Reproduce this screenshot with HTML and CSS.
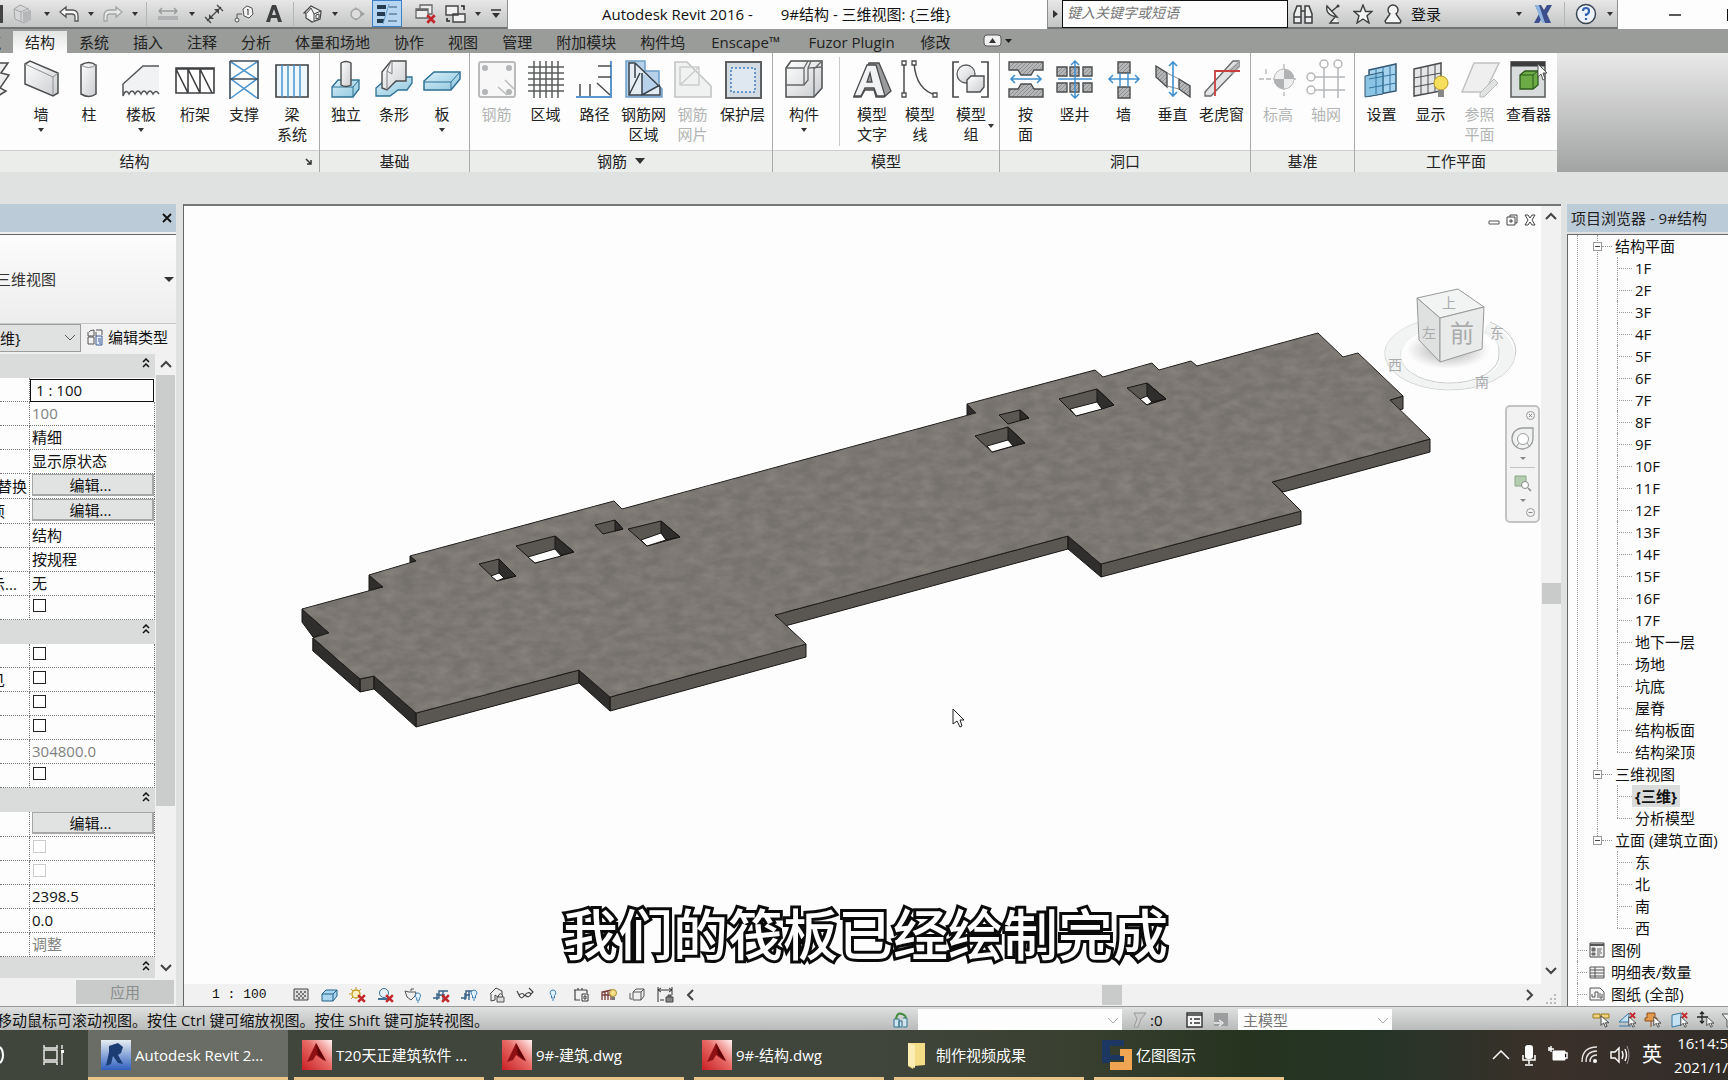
FILE: index.html
```html
<!DOCTYPE html>
<html lang="zh-CN">
<head>
<meta charset="utf-8">
<title>Autodesk Revit 2016 - 9#结构 - 三维视图: {三维}</title>
<link rel="stylesheet" href="styles.css">
</head>
<body>
<svg class="defs" aria-hidden="true">
  <defs>
    <linearGradient id="steel" x1="0" y1="0" x2="1" y2="1"><stop offset="0" stop-color="#fff"/><stop offset="1" stop-color="#c9cccf"/></linearGradient>
    <linearGradient id="aqua" x1="0" y1="0" x2="1" y2="1"><stop offset="0" stop-color="#d8f0f8"/><stop offset="1" stop-color="#8fc6de"/></linearGradient>
    <linearGradient id="red" x1="1" y1="0" x2="0" y2="1"><stop offset="0" stop-color="#fff3f0"/><stop offset=".45" stop-color="#e86a66"/><stop offset="1" stop-color="#c81f24"/></linearGradient>
    <linearGradient id="blue" x1="0" y1="0" x2="0" y2="1"><stop offset="0" stop-color="#e6eef2"/><stop offset="1" stop-color="#2f5fc0"/></linearGradient>
    <pattern id="hatch" width="4" height="4" patternUnits="userSpaceOnUse"><rect width="4" height="4" fill="#b4b6b8"/><path d="M0 4L4 0" stroke="#8d8f91"/></pattern>
    <symbol id="acad" viewBox="0 0 30 30"><rect width="30" height="30" fill="url(#red)"/><path d="M14 3L5 22l6-2 3-5 7 5 3 1z" fill="#8d1015"/><path d="M14 3l2 12 8 6z" fill="#5c0508"/></symbol>
    <symbol id="redx" viewBox="0 0 8 8"><path d="M1 1l6 6M7 1L1 7" stroke="#c3262b" stroke-width="2.2"/></symbol>
    <symbol id="cursor" viewBox="0 0 10 15"><path d="M1 1v11l3-3 2 5 2-1-2-4h4z" fill="#fff" stroke="#333"/></symbol>
    <symbol id="lamp" viewBox="0 0 8 12"><path d="M4 1a3 3 0 0 1 1.500 5.500V9h-3V6.500A3 3 0 0 1 4 1zM3 11h2" fill="#dff0fb" stroke="#3a7fb5"/></symbol>
    <symbol id="fold" viewBox="0 0 8 10"><path d="M1 4l3-3 3 3M1 9l3-3 3 3" fill="none" stroke="#111" stroke-width="1.500"/></symbol>
    <symbol id="chev" viewBox="0 0 12 8"><path d="M1 1l5 5 5-5" fill="none" stroke="#aaa"/></symbol>
  </defs>
</svg>

<header class="titlebar">
  <div class="quick">
    <span class="cutedge"></span>
    <button class="q wide" aria-label="模型"><svg width="22" height="22" viewBox="0 0 22 22"><path d="M2 6l6-4 5 2 5 4v8l-6 4-9-4z" fill="#d5d7d8" stroke="#a3a5a6"/><path d="M2 6l7 3v10M9 9l8-4" fill="none" stroke="#a3a5a6"/><path d="M11 9l8-2v10l-8 4z" fill="#b5b7b8"/></svg></button>
    <button class="drop" aria-label="更多"></button>
    <button class="q" aria-label="放弃"><svg width="20" height="18" viewBox="0 0 20 18"><path d="M7 2L1 7l6 5V9h6q3 0 3 3v4h3v-5q0-6-6-6H7z" fill="#f8f8f8" stroke="#555" stroke-width="1.300"/></svg></button>
    <button class="drop" aria-label="放弃列表"></button>
    <button class="q" aria-label="重做"><svg width="20" height="18" viewBox="0 0 20 18"><path d="M13 2l6 5-6 5V9H7q-3 0-3 3v4H1v-5q0-6 6-6h6z" fill="#e8e8e8" stroke="#a2a4a5" stroke-width="1.300"/></svg></button>
    <button class="drop" aria-label="重做列表"></button>
    <i class="qsep"></i>
    <button class="q wide" aria-label="测量"><svg width="20" height="14" viewBox="0 0 20 14"><path d="M1 4h18M4 1L1 4l3 3M16 1l3 3-3 3" fill="none" stroke="#9a9c9d" stroke-width="1.500"/><path d="M0 11h20" stroke="#b0b2b3" stroke-width="4"/></svg></button>
    <button class="drop" aria-label="测量列表"></button>
    <button class="q" aria-label="对齐尺寸标注"><svg width="20" height="20" viewBox="0 0 20 20"><path d="M3 17L17 3M1 13l6 6M13 1l6 6" stroke="#444" stroke-width="1.300"/><path d="M5 10v5h5zM10 5h5v5z" fill="#444"/></svg></button>
    <button class="q" aria-label="按类别标记"><svg width="20" height="18" viewBox="0 0 20 18"><path d="M9 4l4-3 5 2 1 6-4 4-5-2z" fill="#f2f2f2" stroke="#555"/><path d="M14 4v6M13 5l1-1" stroke="#333"/><path d="M8 9H3v6" fill="none" stroke="#555"/><circle cx="3" cy="15" r="2" fill="#eee" stroke="#555"/></svg></button>
    <button class="q" aria-label="文字"><svg width="18" height="19" viewBox="0 0 18 19"><path d="M7 1h4l6 17h-4l-1-4H6l-1 4H1zM7 11h4L9 5z" fill="#3d3f40" fill-rule="evenodd"/></svg></button>
    <i class="qsep"></i>
    <button class="q" aria-label="默认三维视图"><svg width="20" height="18" viewBox="0 0 20 18"><path d="M1 8l7-7 10 5v1l-1 7-8 3-6-4V8z" fill="#eceded" stroke="#444" stroke-width="1.200"/><path d="M4 8l4-5 3 6v8M11 9l7-3M13 10l3-1v4l-3 1z" fill="#f8f8f8" stroke="#444"/></svg></button>
    <button class="drop" aria-label="三维列表"></button>
    <button class="q" aria-label="剖面"><svg width="18" height="16" viewBox="0 0 18 16"><path d="M7 1l10 7-10 7z" fill="#9fa1a2"/><circle cx="8" cy="8" r="5" fill="#ddd" stroke="#a2a4a5" stroke-width="1.500"/></svg></button>
    <button class="q pressed" aria-label="细线"><svg width="24" height="22" viewBox="0 0 24 22"><path d="M2 4h9M2 11h8M2 18h7" stroke="#263c50" stroke-width="4"/><path d="M14 4h8M14 11h8M13 18h9" stroke="#37556f"/><path d="M14 1L8 21" stroke="#6aa0cf"/></svg></button>
    <button class="q after" aria-label="关闭隐藏窗口"><svg width="22" height="20" viewBox="0 0 22 20"><path d="M5 5V1h12v9h-4M1 5h12v9H1z" fill="#ededed" stroke="#666" stroke-width="1.300"/><path d="M1 6h12" stroke="#666" stroke-width="2"/><use href="#redx" x="11" y="10" width="10" height="10"/></svg></button>
    <button class="q" aria-label="切换窗口"><svg width="22" height="20" viewBox="0 0 22 20"><path d="M1 2h12v9H1z M8 10h12v8H8z" fill="#f1f1f1" stroke="#444" stroke-width="1.400"/><path d="M16 2h3v4M2 14v3h3" fill="none" stroke="#222" stroke-width="1.500"/></svg></button>
    <button class="drop" aria-label="窗口列表"></button>
    <button class="q more-tools" aria-label="自定义快速访问工具栏"><svg width="12" height="10" viewBox="0 0 12 10"><path d="M1 1h10" stroke="#333" stroke-width="1.500"/><path d="M2 4h8l-4 5z" fill="#333"/></svg></button>
  </div>
  <h1>Autodesk Revit 2016 - <span>9#结构 - 三维视图: {三维}</span></h1>
  <div class="info">
    <button class="drop side" aria-label="展开"></button>
    <input type="search" placeholder="键入关键字或短语" aria-label="搜索">
    <button class="q" aria-label="查找"><svg width="20" height="22" viewBox="0 0 20 22"><path d="M1 20v-9l3-8h4v17zM12 20V3h4l3 8v9zM8 8h4M1 14h7M12 14h7" fill="#eee" stroke="#3b3d3e" stroke-width="1.500"/></svg></button>
    <button class="q" aria-label="通讯中心"><svg width="20" height="22" viewBox="0 0 20 22"><path d="M4 3q-2 9 10 11zM9 8l6-5M12 14l-5 6h9" fill="#eee" stroke="#3b3d3e" stroke-width="1.400"/><circle cx="15" cy="3" r="1.500" fill="#3b3d3e"/></svg></button>
    <button class="q" aria-label="收藏夹"><svg width="20" height="20" viewBox="0 0 20 20"><path d="M10 1l2.500 6.500H19l-5 4.300L16 19l-6-4-6 4 2-7.200-5-4.300h6.500z" fill="#f5f5f5" stroke="#3b3d3e" stroke-width="1.400"/></svg></button>
    <button class="q" aria-label="用户"><svg width="20" height="20" viewBox="0 0 20 20"><circle cx="10" cy="6" r="5" fill="#f5f5f5" stroke="#3b3d3e" stroke-width="1.400"/><path d="M7 10l-5 7 1 2h14l1-2-5-7" fill="#f5f5f5" stroke="#3b3d3e" stroke-width="1.400"/></svg></button>
    <button class="login">登录</button>
    <button class="drop" aria-label="登录菜单"></button>
    <button class="q wide" aria-label="Exchange Apps"><svg width="20" height="20" viewBox="0 0 20 20"><path d="M2 1h6l3 5 3-5h5l-5 9 4 9h-6l-3-5-3 5H1l5-9z" fill="#3c4f8c"/><path d="M2 1h4l6 18H9L7 14z" fill="#8fb3dd"/></svg></button>
    <i class="qsep"></i>
    <button class="q wide" aria-label="帮助"><svg width="22" height="22" viewBox="0 0 22 22"><circle cx="11" cy="11" r="9.500" fill="#eef3fa" stroke="#3a4654" stroke-width="1.500"/><path d="M8 8q0-3 3-3t3 3-3 3.500V13M11 15v2" fill="none" stroke="#3763b4" stroke-width="2.200"/></svg></button>
    <button class="drop" aria-label="帮助菜单"></button>
  </div>
  <div class="winctl">
    <button aria-label="最小化"><svg width="12" height="2" viewBox="0 0 12 2"><path d="M0 1h12" stroke="#222" stroke-width="1.500"/></svg></button>
    <button aria-label="最大化"><svg width="12" height="12" viewBox="0 0 12 12"><path d="M1 1h10v10H1z" fill="none" stroke="#111" stroke-width="2"/></svg></button>
  </div>
</header>

<nav class="tabs">
  <button class="edge">建筑</button>
  <button class="active">结构</button><button>系统</button><button>插入</button><button>注释</button><button>分析</button><button>体量和场地</button><button>协作</button><button>视图</button><button>管理</button><button>附加模块</button><button>构件坞</button><button class="addin">Enscape™</button><button class="addin">Fuzor Plugin</button><button>修改</button>
  <button class="min" aria-label="最小化功能区"><svg width="34" height="14" viewBox="0 0 34 14"><rect x="1" y="1" width="17" height="11" rx="3" fill="#f0f1f0" stroke="#555"/><path d="M9.500 4l3.500 5H6z" fill="#333"/><path d="M22 5h7l-3.500 4z" fill="#222"/></svg></button>
</nav>

<section class="ribbon">
  <div class="panel p-struct">
    <div class="tools">
      <button class="tool edge" aria-label="梁"><svg width="16" height="40" viewBox="0 0 16 40"><path d="M-2 4H8L1 14l8 2-9 13 6 3-8 5" fill="#eee" stroke="#4b4d4e" stroke-width="1.500"/></svg></button>
      <button class="tool w50"><svg viewBox="0 0 40 40"><path d="M4 5l5-3 28 12v20l-5 3L4 25z" fill="url(#steel)" stroke="#4b4d4e" stroke-width="1.500"/><path d="M4 5l28 13v18M32 18l5-4" fill="none" stroke="#8c8e90"/></svg>墙<i class="more"></i></button>
      <button class="tool w46"><svg viewBox="0 0 40 40"><path d="M12 6v29q8 5 15 0V6q-7-5-15 0z" fill="url(#steel)" stroke="#4b4d4e" stroke-width="1.500"/><path d="M12 6q8 5 15 0" fill="none" stroke="#8c8e90"/></svg>柱</button>
      <button class="tool w58"><svg viewBox="0 0 40 40"><path d="M38 7H22L2 25v12q3-8 6-2 3-6 6 0 3-6 6 0 3-6 6 0 3-6 6 0 3-5 6 0z" fill="#f1f2f3"/><path d="M38 7H22L2 25v12q3-8 6-2 3-6 6 0 3-6 6 0 3-6 6 0 3-6 6 0 3-5 6 0" fill="none" stroke="#55575a" stroke-width="1.500"/></svg>楼板<i class="more"></i></button>
      <button class="tool w50"><svg viewBox="0 0 40 40"><path d="M1 9h38v25H1zM1 10h38M1 10l12 24V10l12 24V10l12 24" fill="none" stroke="#3d3f40" stroke-width="1.600"/></svg>桁架</button>
      <button class="tool w48"><svg viewBox="0 0 40 40"><path d="M7 3l26 17L7 39M33 3L7 20l26 19" fill="none" stroke="#4a95cd" stroke-width="1.500"/><path d="M6 2h28v38M6 2v38M6 20h28" fill="none" stroke="#3d4b5a" stroke-width="1.600"/></svg>支撑</button>
      <button class="tool w48"><svg viewBox="0 0 40 40"><path d="M4 6h32v32H4z" fill="#edf6fb" stroke="#3d3f40" stroke-width="1.600"/><path d="M10 6v32M16 6v32M22 6v32M28 6v32" stroke="#4a95cd" stroke-width="1.500"/></svg>梁<br>系统</button>
    </div>
    <h2>结构<svg class="launch" width="8" height="8" viewBox="0 0 8 8"><path d="M1 1l5 5M6 2v4H2" fill="none" stroke="#333" stroke-width="1.500"/></svg></h2>
  </div>
  <div class="panel p-found">
    <div class="tools">
      <button class="tool w48"><svg viewBox="0 0 40 40"><path d="M6 28l6-7h21v9l-6 8H6z" fill="url(#aqua)" stroke="#2f7093" stroke-width="1.300"/><path d="M6 28h21v9M27 28l6-7" fill="none" stroke="#2f7093"/><path d="M15 4v22q5 3 10 0V4q-5-3-10 0z" fill="url(#steel)" stroke="#4b4d4e" stroke-width="1.400"/></svg>独立</button>
      <button class="tool w48"><svg viewBox="0 0 40 40"><path d="M2 29l7-6h12l4-5h13v6l-5 7h-9l-8 6H2z" fill="url(#aqua)" stroke="#2f7093" stroke-width="1.300"/><path d="M8 29V13l9-11h15v20H22l-9 9z" fill="url(#steel)" stroke="#4b4d4e" stroke-width="1.400"/><path d="M17 2l-4 10v19M13 12l5 3V2" fill="none" stroke="#7c7e80"/></svg>条形</button>
      <button class="tool w48"><svg viewBox="0 0 40 40"><path d="M2 22l10-9h26v7l-9 11H2z" fill="url(#aqua)" stroke="#2f7093" stroke-width="1.500"/><path d="M2 23h27l9-10M29 23v7" fill="none" stroke="#2f7093"/></svg>板<i class="more"></i></button>
    </div>
    <h2>基础</h2>
  </div>
  <div class="panel p-rebar">
    <div class="tools">
      <button class="tool w49" disabled><svg viewBox="0 0 40 40"><rect x="2" y="3" width="36" height="35" rx="2" fill="#f7f7f7" stroke="#bbb" stroke-width="2"/><g fill="#b3b5b6"><circle cx="8" cy="9" r="3"/><circle cx="32" cy="9" r="3"/><circle cx="8" cy="33" r="3"/><circle cx="32" cy="33" r="3"/></g><path d="M21 28l9 8M28 21l9 9" stroke="#bbb" stroke-width="1.500"/></svg>钢筋</button>
      <button class="tool w49"><svg viewBox="0 0 40 40"><path d="M8 2v37M14 2v37M20 2v37M26 2v37M32 2v37M2 8h36M2 14h36M2 20h36M2 26h36M2 32h36" stroke="#5b5d5e" stroke-width="1.500"/></svg>区域</button>
      <button class="tool w49"><svg viewBox="0 0 40 40"><path d="M36 2v36H1" fill="none" stroke="#5b95cf" stroke-width="2"/><path d="M23 7h13M23 18h13M5 25v12M15 25v12M22 24l13 12" stroke="#4b4d4e" stroke-width="1.500"/></svg>路径</button>
      <button class="tool w49"><svg viewBox="0 0 40 40"><path d="M2 2h19v10h14v15l3 3v8H2z" fill="#b7d1ea" stroke="#6e9dc8" stroke-width="1.500"/><path d="M5 4l6 0 25 24v8H5zM5 36L16 14M18 14v22L36 26M11 5v14" fill="#e5edf4" stroke="#39424b" stroke-width="1.500"/></svg>钢筋网<br>区域</button>
      <button class="tool w49" disabled><svg viewBox="0 0 40 40"><path d="M2 3h12l24 24v11H2z" fill="#f0f1f1" stroke="#c2c4c4" stroke-width="1.600"/><path d="M7 8h19v18H7zM7 26L26 8" fill="none" stroke="#cbcdcd" stroke-width="1.500"/></svg>钢筋<br>网片</button>
      <button class="tool w51"><svg viewBox="0 0 40 40"><rect x="3" y="3" width="35" height="36" fill="#d3dbe3" stroke="#5d6063" stroke-width="2"/><rect x="8" y="9" width="24" height="24" fill="#dfe8f0" stroke="#3f7fc0" stroke-width="1.500" stroke-dasharray="2 2"/></svg>保护层</button>
    </div>
    <h2>钢筋<i class="more big"></i></h2>
  </div>
  <div class="panel p-model">
    <div class="tools">
      <button class="tool w60"><svg viewBox="0 0 40 40"><path d="M2 9l5-7h31v27l-8 9H2z" fill="url(#steel)" stroke="#4b4d4e" stroke-width="1.500"/><path d="M2 9h18v17H2M20 9l4-7M20 26l4-5V9l14-1M24 9l3-7M30 38V10l8-8" fill="none" stroke="#66686a" stroke-width="1.300"/></svg>构件<i class="more"></i></button>
      <i class="rule"></i>
      <button class="tool w48"><svg viewBox="0 0 40 40"><path d="M17 4h10l12 28-7 6h-8l-2-7H13l-4 7H2z" fill="#999b9d" stroke="#4b4d4e" stroke-width="1.300"/><path d="M15 6h9l9 31h-8l-3-8h-9l-4 8H2zM15 23h5l-2-9z" fill="#f1f2f3" fill-rule="evenodd" stroke="#4b4d4e" stroke-width="1.300"/></svg>模型<br>文字</button>
      <button class="tool w48"><svg viewBox="0 0 40 40"><path d="M4 5v30M14 4q2 27 22 32" fill="none" stroke="#4b4d4e" stroke-width="1.500"/><path d="M2 2h4v4H2zM2 34h4v4H2zM12 2h4v4h-4zM33 34h4v4h-4z" fill="#fff" stroke="#4b4d4e" stroke-width="1.300"/></svg>模型<br>线</button>
      <button class="tool w54 flyout"><svg viewBox="0 0 40 40"><path d="M8 3H2v35h6M30 3h7v35h-7" fill="none" stroke="#4b4d4e" stroke-width="1.700"/><circle cx="15" cy="15" r="9" fill="url(#steel)" stroke="#5b5d5f" stroke-width="1.300"/><path d="M16 21l4-4h13v11l-4 5H16z" fill="url(#steel)" stroke="#4b4d4e" stroke-width="1.400"/></svg>模型<br>组<i class="more"></i></button>
    </div>
    <h2>模型</h2>
  </div>
  <div class="panel p-open">
    <div class="tools">
      <button class="tool w49"><svg viewBox="0 0 40 40"><path d="M3 3h34v8h-9l-3 5H15l-3-5H3zM3 38v-8h9l3-5h10l3 5h9v8z" fill="url(#hatch)" stroke="#4b4d4e" stroke-width="1.400"/><path d="M5 20h30M9 16l-4 4 4 4M31 16l4 4-4 4" fill="none" stroke="#3f8fce" stroke-width="1.600"/></svg>按<br>面</button>
      <button class="tool w49"><svg viewBox="0 0 40 40"><path d="M2 8h10v9H2zM2 24h10v9H2zM28 8h9v9h-9zM28 24h9v9h-9zM15 8h9v9h-9zM15 24h9v9h-9z" fill="url(#hatch)" stroke="#4b4d4e" stroke-width="1.400"/><path d="M20 2v37M16 6l4-4 4 4M16 35l4 4 4-4M3 20h34" fill="none" stroke="#3f8fce" stroke-width="1.500"/></svg>竖井</button>
      <button class="tool w49"><svg viewBox="0 0 40 40"><path d="M14 3h12v11H14zM14 28h12v11H14z" fill="url(#hatch)" stroke="#4b4d4e" stroke-width="1.400"/><path d="M5 20h30M9 16l-4 4 4 4M31 16l4 4-4 4M16 14v14M24 14v14" fill="none" stroke="#3f8fce" stroke-width="1.500"/></svg>墙</button>
      <button class="tool w49"><svg viewBox="0 0 40 40"><path d="M3 7l11 7v14L3 18zM26 20l11 7v11l-11-8z" fill="url(#hatch)" stroke="#4b4d4e" stroke-width="1.400"/><path d="M14 14l12 6M14 27l12 3" stroke="#888"/><path d="M20 3v34M16 7l4-4 4 4M16 33l4 4 4-4" fill="none" stroke="#3f8fce" stroke-width="1.600"/></svg>垂直</button>
      <button class="tool w49"><svg viewBox="0 0 40 40"><path d="M3 33L31 2h6v6L9 37H3z" fill="#e2e3e4" stroke="#66686a" stroke-width="1.300"/><path d="M25 12l12-10v7l-6 6z" fill="url(#hatch)"/><path d="M13 37V12h25" fill="none" stroke="#c8403c" stroke-width="1.800"/></svg>老虎窗</button>
    </div>
    <h2>洞口</h2>
  </div>
  <div class="panel p-datum">
    <div class="tools">
      <button class="tool w48" disabled><svg viewBox="0 0 40 40"><path d="M1 20h37M8 10v7M26 5v32" stroke="#b5b7b8" stroke-width="1.300" stroke-dasharray="5 2"/><circle cx="26" cy="20" r="10" fill="#eee" stroke="#bbb"/><path d="M26 10a10 10 0 0 1 10 10H26zM26 20v10a10 10 0 0 1-10-10z" fill="#b0b2b3"/></svg>标高</button>
      <button class="tool w48" disabled><svg viewBox="0 0 40 40"><g fill="#fff" stroke="#b5b7b8" stroke-width="1.500"><path d="M18 9v30M32 9v30M9 18h30M9 31h30"/><circle cx="18" cy="5" r="4"/><circle cx="32" cy="5" r="4"/><circle cx="5" cy="18" r="4"/><circle cx="5" cy="31" r="4"/></g></svg>轴网</button>
    </div>
    <h2>基准</h2>
  </div>
  <div class="panel p-plane">
    <div class="tools">
      <button class="tool w49"><svg viewBox="0 0 40 40"><path d="M7 11l27-6v27L7 37z" fill="#a6d3ee" stroke="#34576f" stroke-width="1.500"/><path d="M3 17l18-4v22L3 38z" fill="#8cc4e6" stroke="#34576f"/><path d="M14 9v26M21 8v26M28 6v27M7 20l27-5M7 29l27-5" stroke="#34759d"/></svg>设置</button>
      <button class="tool w49"><svg viewBox="0 0 40 40"><path d="M3 10l27-6v28L3 37z" fill="#e4e6e7" stroke="#4b4d4e" stroke-width="1.500"/><path d="M10 8v28M17 7v27M24 5v28M3 19l27-5M3 28l27-5" stroke="#4b4d4e"/><circle cx="30" cy="24" r="7" fill="#f7df5e" stroke="#b79a2a"/><path d="M27 31h6v7h-6z" fill="#888"/></svg>显示</button>
      <button class="tool w49" disabled><svg viewBox="0 0 40 40"><path d="M14 4h25L25 33H2z" fill="#efefef" stroke="#c0c2c2" stroke-width="1.500"/><path d="M20 34l14-14 4 4-14 14h-4z" fill="#e1e2e2" stroke="#b9bbbb"/></svg>参照<br>平面</button>
      <button class="tool w49"><svg viewBox="0 0 40 40"><path d="M2 3h34v35H2z" fill="#d9dcdd" stroke="#55585a" stroke-width="1.500"/><path d="M2 5h34" stroke="#3a3c3e" stroke-width="5"/><path d="M11 16l5-4h13v14l-5 4H11z" fill="#6cab45" stroke="#2d5b1c" stroke-width="1.300"/><path d="M11 16h13v14M24 16l5-4" fill="none" stroke="#2d5b1c"/><path d="M29 5v13l3-3 2 6 2-1-2-6h4z" fill="#fff" stroke="#555"/></svg>查看器</button>
    </div>
    <h2>工作平面</h2>
  </div>
</section>

<main class="workspace">
  <aside class="props">
    <header class="dock"><button aria-label="关闭"><svg width="12" height="12" viewBox="0 0 12 12"><path d="M2 2l8 8M10 2l-8 8" stroke="#111" stroke-width="1.800"/></svg></button></header>
    <div class="inner">
      <div class="type"><span>三维视图</span><button class="drop" aria-label="类型选择器"></button></div>
      <div class="filter">
        <button class="instance"><span>维}</span><svg width="12" height="8" viewBox="0 0 12 8"><path d="M1 1l5 5 5-5" fill="none" stroke="#555"/></svg></button>
        <button class="edittype"><svg width="16" height="17" viewBox="0 0 16 17"><path d="M2 3q1-2 5-2v6H1V3M9 1h6v5M1 8h6v7H1zM9 3v4" fill="none" stroke="#555"/><path d="M9 7h6v9H9z" fill="#e5edf8" stroke="#3c5a94"/><path d="M11 10h3M11 12h3M12 14h2" stroke="#3c5a94"/></svg>编辑类型</button>
      </div>
      <div class="list">
        <table>
          <colgroup><col class="name"><col></colgroup>
          <tbody>
            <tr class="group"><th colspan="2"><svg width="8" height="10"><use href="#fold"/></svg></th></tr>
            <tr><th></th><td class="focus"><input type="text" value="1 : 100" aria-label="视图比例"></td></tr>
            <tr><th></th><td class="dim">100</td></tr>
            <tr><th></th><td>精细</td></tr>
            <tr><th></th><td>显示原状态</td></tr>
            <tr><th class="end">替换</th><td><button>编辑...</button></td></tr>
            <tr><th><span>项</span></th><td><button>编辑...</button></td></tr>
            <tr><th></th><td>结构</td></tr>
            <tr><th></th><td>按规程</td></tr>
            <tr><th><span>示...</span></th><td>无</td></tr>
            <tr><th></th><td><input type="checkbox" aria-label="日光路径"></td></tr>
            <tr class="group"><th colspan="2"><svg width="8" height="10"><use href="#fold"/></svg></th></tr>
            <tr><th></th><td><input type="checkbox" aria-label="裁剪视图"></td></tr>
            <tr><th><span>见</span></th><td><input type="checkbox" aria-label="裁剪区域可见"></td></tr>
            <tr><th></th><td><input type="checkbox" aria-label="注释裁剪"></td></tr>
            <tr><th></th><td><input type="checkbox" aria-label="远剪裁激活"></td></tr>
            <tr><th></th><td class="dim">304800.0</td></tr>
            <tr><th></th><td><input type="checkbox" aria-label="剖面框"></td></tr>
            <tr class="group"><th colspan="2"><svg width="8" height="10"><use href="#fold"/></svg></th></tr>
            <tr><th></th><td><button>编辑...</button></td></tr>
            <tr><th></th><td><input type="checkbox" disabled aria-label="锁定的方向"></td></tr>
            <tr><th></th><td><input type="checkbox" disabled aria-label="透视图"></td></tr>
            <tr><th></th><td>2398.5</td></tr>
            <tr><th></th><td>0.0</td></tr>
            <tr><th></th><td class="dim">调整</td></tr>
            <tr class="group"><th colspan="2"><svg width="8" height="10"><use href="#fold"/></svg></th></tr>
          </tbody>
        </table>
        <div class="vscroll pscroll">
          <svg width="12" height="8" viewBox="0 0 12 8"><path d="M1 7l5-5 5 5" fill="none" stroke="#444" stroke-width="2"/></svg>
          <i></i>
          <svg width="12" height="8" viewBox="0 0 12 8"><path d="M1 1l5 5 5-5" fill="none" stroke="#444" stroke-width="2"/></svg>
        </div>
      </div>
      <footer><button disabled>应用</button></footer>
    </div>
  </aside>

  <section class="view">
    <div class="stage">
      <div class="canvas">
        <svg class="scene" viewBox="184 206 1357 778" aria-label="筏板三维模型">
          <defs>
            <filter id="grain" x="0" y="0" width="1" height="1"><feTurbulence type="fractalNoise" baseFrequency=".06 .12" numOctaves="3" seed="4"/><feColorMatrix values="0 0 0 0 .38  0 0 0 0 .35  0 0 0 0 .30  .6 0 0 0 -.16"/><feComposite in2="SourceGraphic" operator="in"/></filter>
            <radialGradient id="shade"><stop offset="0" stop-color="#777" stop-opacity=".7"/><stop offset="1" stop-color="#999" stop-opacity="0"/></radialGradient>
            <path id="slab" d="M302 609L383 587 369 575 416 561 410 556 614 501 622 509 976 413 967 404 1095 370 1103 377 1152 363 1159 370 1191 361 1197 366 1318 333 1343 357 1358 353 1403 396 1390 400 1430 439 1272 482 1301 511 1101 564 1068 536 775 615 806 644 610 697 579 670 416 713 374 676 360 679 313 638 329 633z"/>
          </defs>
          <g stroke="#171615" stroke-linejoin="round">
            <g fill="#5a5652">
              <path d="M313 638l16-5v13l-16 5zM360 679l14-3v13l-14 3zM416 713l163-43v13L416 727zM610 697l196-53v13l-196 54zM775 615l293-79v13l-283 77zM1101 564l200-53v13l-200 53zM1272 482l158-43v13l-147 40zM1390 400l13-4v13l-5 1z"/>
            </g>
            <g fill="#302e2c">
              <path d="M302 609l27 24-5 2-11 2-11-15zM313 638l47 41v13l-47-41zM374 676l42 37v14l-42-38zM579 670l31 27v14l-31-28zM1068 536l33 28v13l-33-28zM369 575l14 12-14 4zM410 556l6 5-6 2zM967 404l9 9-9 2z"/>
            </g>
            <use href="#slab" fill="#75716d"/>
          </g>
          <use href="#slab" fill="#000" filter="url(#grain)"/>
          <g stroke="#171615" stroke-linejoin="round">
            <path d="M479 564l20-5 17 17-19 5zM516 546l39-10 19 16-39 11zM595 525l20-5 8 9-20 5zM628 529l33-8 19 16-33 9zM975 436l33-9 17 16-33 9zM999 415l21-5 9 8-21 6zM1059 399l38-10 17 16-38 11zM1127 388l20-5 19 16-19 6z" fill="#5a5652"/>
            <path d="M499 559l17 17-12 3-5-6zM555 536l19 16-12 3-7-6zM615 520l8 9-8 2zM661 521l19 16-14 3-5-7zM1008 427l17 16-12 3-5-6zM1020 410l9 8-9 2zM1097 389l17 16-12 4-5-7zM1147 383l19 16-14 3-5-6z" fill="#302e2c"/>
            <path d="M491 576l8-3 5 5-7 3zM528 557l27-8 6 7-26 7zM641 540l20-7 5 7-19 6zM987 446l21-6 5 6-21 6zM1070 409l27-7 5 7-26 7zM1140 399l7-3 5 6-5 3z" fill="#fdfdfd"/>
          </g>
          <g class="cube" stroke-width="1">
            <path d="M1385 351a64.500 36 0 1 0 130 5 64.500 36 0 0 0-25-34M1420 322a64.500 36 0 0 0-35 29M1401 350a49.500 28 0 1 0 98 3 49.500 28 0 0 0-14-22" fill="none" stroke="#c6c8c8"/>
            <path d="M1385 352a64.500 36 0 1 0 130 3q-2-20-26-32l-6 10q18 10 17 20a49.500 27 0 1 1-98 0q0-10 17-20v-11q-33 10-34 30z" fill="#eff0f0" opacity=".8"/>
            <ellipse cx="1448" cy="350" rx="42" ry="19" fill="url(#shade)"/>
            <path d="M1417 298l41-9 26 18-44 11z" fill="#f2f3f3" stroke="#999"/>
            <path d="M1417 298l23 20v44l-21-22z" fill="#dfe0e0" stroke="#999"/>
            <path d="M1440 318l44-11-2 42-42 13z" fill="#e9eaea" stroke="#999"/>
            <text x="1450" y="342" class="t24">前</text><text x="1442" y="308" class="t14">上</text><text x="1422" y="338" class="t14">左</text>
            <text x="1388" y="370" class="t14">西</text><text x="1475" y="387" class="t14">南</text><text x="1490" y="338" class="t14">东</text>
          </g>
        </svg>
        <div class="mdi">
          <button aria-label="最小化视图"><svg width="12" height="12" viewBox="0 0 12 12"><path d="M1 7h10v3H1z" fill="#fff" stroke="#555"/></svg></button>
          <button aria-label="还原视图"><svg width="12" height="12" viewBox="0 0 12 12"><path d="M4 3V1h7v8H9M1 3h8v8H1zM4 6h2v2H4z" fill="#fff" stroke="#444"/></svg></button>
          <button aria-label="关闭视图"><svg width="12" height="12" viewBox="0 0 12 12"><path d="M1 1h3l2 3 2-3h3L8 6l3 5H8L6 8l-2 3H1l3-5z" fill="#fff" stroke="#444"/></svg></button>
        </div>
        <div class="navbar">
          <svg class="x" width="9" height="9" viewBox="0 0 9 9"><circle cx="4.500" cy="4.500" r="4" fill="none" stroke="#999"/><path d="M3 3l3 3M6 3L3 6" stroke="#888"/></svg>
          <button aria-label="导航控制盘"><svg width="24" height="24" viewBox="0 0 24 24"><path d="M12 1h10v10a10.500 10.500 0 1 1-10-10z" fill="#f0f1f1" stroke="#9b9d9d" stroke-width="1.300"/><circle cx="12" cy="12" r="5.500" fill="#fff" stroke="#9b9d9d"/><path d="M8 16l-3 4M16 16l3 4" stroke="#9b9d9d"/></svg></button>
          <i></i>
          <hr>
          <button aria-label="区域放大"><svg width="18" height="18" viewBox="0 0 18 18"><path d="M1 2h11v10H1z" fill="#b4cdb0" stroke="#8aa886"/><circle cx="11" cy="11" r="3.500" fill="#fff" stroke="#888"/><path d="M14 14l3 3" stroke="#888" stroke-width="1.500"/></svg></button>
          <i></i>
          <svg class="x" width="9" height="9" viewBox="0 0 9 9"><circle cx="4.500" cy="4.500" r="4" fill="none" stroke="#999"/><path d="M2.500 4.500h4" stroke="#888"/></svg>
        </div>
        <svg class="pointer" width="13" height="20" viewBox="0 0 13 20"><path d="M1 1v15l4-3 3 6 2-1-2-6h4z" fill="#fff" stroke="#222"/></svg>
        <p class="caption">我们的筏板已经绘制完成</p>
      </div>
      <div class="viewbar">
        <span class="scale">1 : 100</span>
        <button aria-label="详细程度"><svg viewBox="0 0 18 18"><path d="M2 3h14v11H2z" fill="#ddd" stroke="#444"/><path d="M4 5h2v2H4zM8 5h2v2H8zM12 5h2v2h-2zM6 7h2v2H6zM10 7h2v2h-2zM4 9h2v2H4zM8 9h2v2H8zM12 9h2v2h-2zM6 11h2v2H6zM10 11h2v2h-2z" fill="#777"/></svg></button>
        <button aria-label="视觉样式"><svg viewBox="0 0 18 18"><path d="M2 8l4-4h11v6l-4 5H2z" fill="#a9d6ee" stroke="#24618a"/><path d="M2 8h11v7M13 8l4-4" fill="none" stroke="#24618a"/></svg></button>
        <button aria-label="日光路径"><svg viewBox="0 0 18 18"><circle cx="8" cy="8" r="4" fill="#fdf3c0" stroke="#c59a22" stroke-width="1.300"/><path d="M8 1v2M1 8h2M3 3l2 2M13 3l-2 2M3 13l2-2" stroke="#c59a22"/><use href="#redx" x="9" y="8" width="9" height="9"/></svg></button>
        <button aria-label="阴影"><svg viewBox="0 0 18 18"><circle cx="8" cy="7" r="4.500" fill="#e7f0f7" stroke="#3f7196"/><path d="M2 13h10" stroke="#3f7196" stroke-width="2"/><use href="#redx" x="9" y="8" width="9" height="9"/></svg></button>
        <button aria-label="渲染"><svg viewBox="0 0 18 18"><path d="M1 5l4 1h7l-1 4-4 4-4-3-1-3zM7 5V3h3" fill="#eee" stroke="#555"/><use href="#lamp" x="10" y="6" width="8" height="11"/></svg></button>
        <button aria-label="裁剪视图"><svg viewBox="0 0 18 18"><path d="M1 12h6V5h9M5 9h8M11 5v9M5 7v7" fill="none" stroke="#3a6286" stroke-width="1.400"/><use href="#redx" x="9" y="8" width="9" height="9"/></svg></button>
        <button aria-label="显示裁剪区域"><svg viewBox="0 0 18 18"><path d="M1 12h5V5h7M5 9h5M5 7v7M9 5v9" fill="none" stroke="#3a6286" stroke-width="1.400"/><use href="#lamp" x="10" y="3" width="8" height="12"/></svg></button>
        <button aria-label="锁定三维视图"><svg viewBox="0 0 18 18"><path d="M2 8l6-6 6 3v4M3 8v7l4-1V9l3 2" fill="#f0f0f0" stroke="#444"/><path d="M9 11h7v5H9zM10.500 11V9q2-3 4 0v2" fill="#ddd" stroke="#555"/></svg></button>
        <button aria-label="临时隐藏"><svg viewBox="0 0 18 18"><path d="M1 5l2 4q2 5 5 1l1-1q4 4 6-1l2-2-4-4M8 9q-1-3-5 0M15 8q-3-3-6 1" fill="none" stroke="#444" stroke-width="1.200"/></svg></button>
        <button aria-label="显示隐藏图元"><svg viewBox="0 0 18 18"><use href="#lamp" x="5" y="3" width="8" height="12"/></svg></button>
        <button aria-label="临时视图属性"><svg viewBox="0 0 18 18"><path d="M2 4h13M3 4v10h5M15 4v3M6 4V2M10 4V2" fill="none" stroke="#444" stroke-width="1.200"/><path d="M10 8h6v7h-6zM12 10h2v3h-2z" fill="#fff" stroke="#333"/></svg></button>
        <button aria-label="分析模型"><svg viewBox="0 0 18 18"><path d="M2 14V6l9-2v10M2 9h10M5 6v8M8 5v9" fill="none" stroke="#7a3d3a" stroke-width="1.300"/><circle cx="13" cy="7" r="3.500" fill="#f4e08a" stroke="#a98b2c"/><path d="M12 11h3v3h-3z" fill="#777"/></svg></button>
        <button aria-label="高亮位移集"><svg viewBox="0 0 18 18"><path d="M5 6l3-3h8v7l-3 4H5zM5 6h8v8M13 6l3-3M2 7v6h2" fill="#eee" stroke="#555"/></svg></button>
        <button aria-label="显示约束"><svg viewBox="0 0 18 18"><path d="M2 1v15M16 1v8M2 4h14M5 2L2 4l3 2M13 2l3 2-3 2M4 14h4" fill="none" stroke="#333"/><path d="M10 11h7v5h-7zM12 11V9h3v2" fill="#888" stroke="#444"/></svg></button>
        <button class="narrow" aria-label="向左滚动"><svg viewBox="0 0 18 18"><path d="M11 4L6 9l5 5" fill="none" stroke="#444" stroke-width="2"/></svg></button>
        <div class="hscroll"><i></i></div>
        <button class="narrow" aria-label="向右滚动"><svg viewBox="0 0 18 18"><path d="M7 4l5 5-5 5" fill="none" stroke="#444" stroke-width="2"/></svg></button>
      </div>
    </div>
    <div class="vscroll wscroll">
      <svg width="12" height="8" viewBox="0 0 12 8"><path d="M1 7l5-5 5 5" fill="none" stroke="#444" stroke-width="2"/></svg>
      <i></i>
      <svg width="12" height="8" viewBox="0 0 12 8"><path d="M1 1l5 5 5-5" fill="none" stroke="#444" stroke-width="2"/></svg>
      <svg class="grip" width="12" height="12" viewBox="0 0 12 12"><path d="M9 1h2v2H9zM5 5h2v2H5zM9 5h2v2H9zM1 9h2v2H1zM5 9h2v2H5zM9 9h2v2H9z" fill="#bbb"/></svg>
    </div>
  </section>

  <aside class="browser">
    <header class="dock">项目浏览器 - 9#结构</header>
    <ul class="tree">
      <li class="views">
        <ul class="l1">
          <li><b class="box"></b>结构平面
            <ul class="l2"><li>1F</li><li>2F</li><li>3F</li><li>4F</li><li>5F</li><li>6F</li><li>7F</li><li>8F</li><li>9F</li><li>10F</li><li>11F</li><li>12F</li><li>13F</li><li>14F</li><li>15F</li><li>16F</li><li>17F</li><li>地下一层</li><li>场地</li><li>坑底</li><li>屋脊</li><li>结构板面</li><li>结构梁顶</li></ul>
          </li>
          <li><b class="box"></b>三维视图
            <ul class="l2"><li><strong>{三维}</strong></li><li>分析模型</li></ul>
          </li>
          <li><b class="box"></b>立面 (建筑立面)
            <ul class="l2"><li>东</li><li>北</li><li>南</li><li>西</li></ul>
          </li>
        </ul>
      </li>
      <li class="leaf"><svg width="16" height="16" viewBox="0 0 16 16"><path d="M1 1h14v14H1z" fill="#f1f1f1" stroke="#444"/><path d="M1 3h14" stroke="#555" stroke-width="2"/><path d="M3 6h3v3H3zM3 11h3v2H3zM8 7h5M8 9h4M8 11h5M8 13h3" fill="#777" stroke="#666"/></svg>图例</li>
      <li class="leaf"><svg width="16" height="16" viewBox="0 0 16 16"><path d="M1 3h14v11H1zM1 6h14M1 9h14M1 12h14M6 3v11" fill="#f5f5f5" stroke="#555"/></svg>明细表/数量</li>
      <li class="leaf"><svg width="16" height="16" viewBox="0 0 16 16"><path d="M1 2h10l4 4v8H1zM3 11h3V6h3v6M3 8v3M11 7v5h2V8" fill="#f5f5f5" stroke="#555"/></svg>图纸 (全部)</li>
    </ul>
  </aside>
</main>

<div class="status">
  <p>移动鼠标可滚动视图。按住 Ctrl 键可缩放视图。按住 Shift 键可旋转视图。</p>
  <div class="sets">
    <svg width="18" height="18" viewBox="0 0 18 18"><path d="M2 8h5v8H2zM11 7h4v9h-4M7 10h3v6H7z" fill="#cfe4ee" stroke="#31708f"/><path d="M4 8q1-7 6-5t3 4" fill="none" stroke="#3e8a3a" stroke-width="2"/></svg>
    <span class="combo"><select class="workset" aria-label="工作集"><option></option></select><svg width="12" height="8"><use href="#chev"/></svg></span>
    <svg width="18" height="18" viewBox="0 0 18 18"><path d="M4 2h12l-5 6-3 8H4l3-8z" fill="#ccc" stroke="#999"/></svg>
    <output>:0</output>
    <svg width="18" height="18" viewBox="0 0 18 18"><path d="M1 2h15v14H1z" fill="#f6f6f6" stroke="#333" stroke-width="1.400"/><path d="M1 4h15M4 8h2M4 12h2M8 8h6M8 12h6" stroke="#333" stroke-width="1.400"/></svg>
    <svg width="18" height="18" viewBox="0 0 18 18"><path d="M2 2h14v13H2z" fill="#9b9d9e"/><path d="M2 12h7M7 9l4 3-4 3" fill="none" stroke="#eee" stroke-width="1.300"/></svg>
    <span class="combo"><select class="option" aria-label="设计选项"><option>主模型</option></select><svg width="12" height="8"><use href="#chev"/></svg></span>
  </div>
  <div class="select">
    <button aria-label="选择链接"><svg viewBox="0 0 22 18"><path d="M2 3h7v4H2zM10 3h8v4h-8z" fill="#f0d37a" stroke="#9a7a20"/><use href="#cursor" x="9" y="4" width="9" height="13"/></svg></button>
    <button aria-label="选择底图图元"><svg viewBox="0 0 22 18"><path d="M2 11L12 2v9zM2 15h12" fill="#c5e1f2" stroke="#3878a4"/><use href="#redx" x="12" y="1" width="7" height="7"/><use href="#cursor" x="11" y="5" width="8" height="12"/></svg></button>
    <button aria-label="选择锁定图元"><svg viewBox="0 0 22 18"><path d="M4 2h8v5h2v3H2V7h2zM8 10v6" fill="#e29a4c" stroke="#8d4f1c"/><use href="#cursor" x="10" y="5" width="8" height="12"/></svg></button>
    <button aria-label="按面选择图元"><svg viewBox="0 0 22 18"><path d="M3 4l9-2v12l-9 2z" fill="#c5e1f2" stroke="#3878a4"/><use href="#redx" x="12" y="1" width="7" height="7"/><use href="#cursor" x="11" y="5" width="8" height="12"/></svg></button>
    <button aria-label="选择时拖曳图元"><svg viewBox="0 0 22 18"><path d="M7 1v11M2 6h11M5 3l2-2 2 2M5 10l2 2 2-2" fill="none" stroke="#222" stroke-width="1.300"/><use href="#cursor" x="11" y="5" width="8" height="12"/></svg></button>
    <button aria-label="过滤"><svg viewBox="0 0 22 18"><path d="M1 3h14L9 9v7H6V9z" fill="#eee" stroke="#555"/></svg></button>
  </div>
</div>

<footer class="taskbar">
  <button class="ring" aria-label="Cortana"><svg width="4" height="20" viewBox="0 0 4 20"><path d="M0 2q3 3 3 8t-3 8" fill="none" stroke="#fff" stroke-width="2"/></svg></button>
  <button class="tasks" aria-label="任务视图"><svg width="22" height="22" viewBox="0 0 22 22"><path d="M1 1v3h13V1M1 21v-3h13v3M1 6v10h13V6zM19 1v4M19 9v12" fill="none" stroke="#f0f0ee" stroke-width="1.400"/><path d="M18 6h3v3h-3z" fill="#fff"/></svg></button>
  <button class="app revit"><svg width="30" height="30" viewBox="0 0 30 30"><rect width="30" height="30" fill="url(#blue)"/><path d="M8 6l9-3 5 4-2 6-3 2 5 9-5-1-5-7-2 8-5 2 3-14z" fill="#1c3c74"/></svg>Autodesk Revit 2...</button>
  <button class="app"><svg width="30" height="30"><use href="#acad"/></svg>T20天正建筑软件 ...</button>
  <button class="app"><svg width="30" height="30"><use href="#acad"/></svg>9#-建筑.dwg</button>
  <button class="app"><svg width="30" height="30"><use href="#acad"/></svg>9#-结构.dwg</button>
  <button class="app"><svg width="30" height="30" viewBox="0 0 30 30"><path d="M6 3h17v22l-11 1-1 3-5-3z" fill="#f4dd87"/><path d="M6 3l7 2v23l-7-3z" fill="#fbeeb4"/></svg>制作视频成果</button>
  <button class="app"><svg width="30" height="30" viewBox="0 0 30 30"><path d="M0 0h22v6H8v9h14v5H8v3H0z" fill="#1d3763"/><path d="M18 9h12v21H8v-8h14v-6h-4z" fill="#efa552"/></svg>亿图图示</button>
  <div class="tray">
    <svg width="18" height="30" viewBox="0 0 18 30"><path d="M1 19l8-8 8 8" fill="none" stroke="#fff" stroke-width="1.500"/></svg>
    <svg width="14" height="30" viewBox="0 0 14 30"><rect x="3" y="5" width="8" height="14" rx="3" fill="#fff"/><path d="M1 15v5h12v-5M7 20v4M3 25h8" fill="none" stroke="#fff" stroke-width="1.500"/></svg>
    <svg width="20" height="30" viewBox="0 0 20 30"><path d="M5 11h12v9H5z" fill="#fff" stroke="#fff"/><path d="M17 13h2v5h-2M3 6v6M1 9h5M1 7v4" stroke="#fff" stroke-width="1.500"/></svg>
    <svg width="18" height="30" viewBox="0 0 18 30"><g fill="none" stroke="#e5e5e3" stroke-width="1.400"><path d="M2 22Q2 7 17 7M6 22q0-11 11-11M10 22q0-7 7-7"/></g><circle cx="15" cy="21" r="2" fill="#fff"/></svg>
    <svg width="20" height="30" viewBox="0 0 20 30"><path d="M1 12h4l4-4v14l-4-4H1zM12 11q2 4 0 8M15 9q3 6 0 12" fill="none" stroke="#fff" stroke-width="1.400"/><path d="M17 6q4 9 0 18" fill="none" stroke="#999"/></svg>
    <span class="ime">英</span>
    <time><span>16:14:5</span><span>2021/1/</span></time>
  </div>
</footer>
</body>
</html>
```
FILE: styles.css
```css
* { box-sizing: border-box; }
body {
  margin: 0;
  height: 100vh;
  display: flex;
  flex-direction: column;
  overflow: hidden;
  background: #e0e2e1;
  color: #222;
  font: 15px/20px "Open Sans", "Noto Sans CJK SC", sans-serif;
}
button, input, select { font: inherit; color: inherit; }
button { padding: 0; border: 0; background: none; white-space: nowrap; }
h1, h2, p, ul { margin: 0; padding: 0; font-weight: 400; }
ul { list-style: none; }
svg { display: block; flex: none; }
.defs { position: absolute; width: 0; height: 0; }

/* Title bar */
.titlebar { display: flex; height: 29px; flex: none; background: #fdfdfd; }
.quick, .info {
  display: flex;
  align-items: center;
  flex: none;
  border-right: 1px solid #8d8f8e;
  border-bottom: 2px solid #717372;
  background: linear-gradient(#e6e7e6, #c3c5c4);
}
.cutedge { width: 3px; height: 18px; margin-right: 3px; background: #444; }
.q { display: flex; justify-content: center; align-items: center; width: 30px; height: 27px; }
.q.wide { width: 34px; }
.q.pressed { border: 1px solid #3c7fc4; background: #b5d5f1; }
.q.after { margin-left: 9px; }
.q.more-tools { width: 22px; }
.drop { width: 14px; height: 27px; display: flex; justify-content: center; align-items: center; }
.drop::before { content: ""; border: 3px solid transparent; border-top: 4px solid #333; border-bottom: 0; }
.drop.side::before { border: 4px solid transparent; border-left: 5px solid #333; border-right: 0; }
.qsep { width: 1px; height: 24px; margin: 0 4px; background: #b4b6b5; }
h1 { flex: 1; font-size: 15px; line-height: 29px; padding-left: 94px; color: #111; white-space: nowrap; }
h1 span { margin-left: 24px; }
.info { border-left: 1px solid #8d8f8e; width: 571px; }
.info input { width: 226px; height: 28px; margin-top: 1px; padding: 0 4px 4px; border: 1px solid #111; background: #fdfdfd; outline: 0; border-radius: 0; }
.info input::placeholder { color: #777; font-style: italic; font-size: 14px; }
.login { padding: 0 3px; margin-right: auto; color: #111; }
.winctl { display: flex; align-items: center; justify-content: space-between; width: 110px; padding-left: 51px; overflow: hidden; }
.winctl button + button { margin-right: -11px; }

/* Ribbon tabs */
.tabs { display: flex; align-items: flex-end; height: 24px; flex: none; background: #9a9c99; overflow: hidden; }
.tabs button { height: 24px; padding: 0 12px; line-height: 26px; }
.tabs .edge { width: 13px; padding: 0; display: flex; justify-content: flex-end; padding-right: 12px; }
.tabs .active { height: 22px; line-height: 22px; background: linear-gradient(#e2e4e2, #fdfdfd); }
.tabs .addin { padding: 0 14px; }
.tabs .min { padding: 0 20px; align-self: center; display: flex; align-items: center; }

/* Ribbon panels */
.ribbon { display: flex; flex: none; height: 119px; background: linear-gradient(#e8e9e8, #a2a4a3); }
.panel { display: flex; flex-direction: column; flex: none; border-right: 1px solid #a9abaa; background: #fdfdfd; }
.panel:last-child { border-right: 0; }
.tools { display: flex; flex: 1; }
.panel h2 {
  display: flex;
  align-items: center;
  justify-content: center;
  height: 22px;
  padding-bottom: 2px;
  border-top: 1px solid #cfd1d0;
  background: #ebedeb;
  font-size: 15px;
  line-height: 18px;
  position: relative;
}
.launch { position: absolute; right: 6px; top: 7px; }
.p-struct h2 { padding-right: 50px; }
.p-struct .tools { padding-right: 3px; }
.p-found .tools { padding: 0 3px 0 2px; }
.p-rebar .tools { padding: 0 4px 0 2px; }
.p-model .tools { padding: 0 1px; }
.p-open .tools { padding: 0 4px 0 1px; }
.p-datum .tools { padding: 0 4px 0 3px; }
.p-plane .tools { padding: 0 4px 0 2px; }
.tool { display: block; align-self: flex-start; position: relative; padding-top: 6px; text-align: center; }
.tool svg { width: 40px; height: 40px; margin: 0 auto 5px; }
.tool.edge svg { width: 16px; }
.tool:disabled { color: #b3b5b4; }
.w46 { width: 46px; } .w48 { width: 48px; } .w49 { width: 49px; } .w50 { width: 50px; }
.w51 { width: 51px; } .w54 { width: 54px; } .w58 { width: 58px; } .w60 { width: 60px; }
.more { display: block; width: 0; margin: 4px auto 0; }
.tool .more { border: 3px solid transparent; border-top: 4px solid #333; border-bottom: 0; }
.flyout .more { position: absolute; right: 4px; bottom: 16px; }
.more.big { margin: 0 0 0 8px; border: 5px solid transparent; border-top: 6px solid #333; border-bottom: 0; }
.rule { width: 1px; margin: 4px 8px 4px 5px; background: #c9cbca; }

/* Workspace */
.workspace { display: flex; flex: 1; min-height: 0; padding-top: 32px; }
.dock { display: flex; align-items: center; height: 28px; flex: none; background: #bccbd8; color: #222; }
.props { width: 176px; flex: none; display: flex; flex-direction: column; background: #f0f1f0; color: #111; }
.props .dock { justify-content: flex-end; padding-right: 3px; }
.inner { display: flex; flex-direction: column; flex: 1; min-height: 0; margin-top: 2px; border-top: 1px solid #666; }
.type { display: flex; justify-content: space-between; align-items: center; height: 89px; border-bottom: 1px solid #c6c8c7; background: linear-gradient(#fcfcfc, #ecedec); color: #333; overflow: hidden; flex: none; }
.type span { margin-left: -4px; }
.type .drop::before { border-width: 5px 5px 0; }
.filter { display: flex; height: 30px; align-items: flex-start; flex: none; }
.instance { display: flex; justify-content: space-between; align-items: center; width: 81px; height: 28px; padding-right: 4px; border: 1px solid #9b9d9c; border-left: 0; background: #e0e2e1; }
.edittype { display: flex; align-items: center; gap: 5px; height: 26px; padding-left: 6px; }
.list { display: flex; flex: 1; min-height: 0; overflow: hidden; }
.props table { width: 155px; align-self: flex-start; border-collapse: separate; border-spacing: 0; table-layout: fixed; background: #fdfdfd; }
.props .name { width: 30px; }
.props tr { height: 24px; }
.props th, .props td { height: 24px; padding: 0; font-weight: 400; line-height: 20px; text-align: left; vertical-align: middle; white-space: nowrap; border-bottom: 1px dotted #777; border-right: 1px dotted #777; overflow: hidden; }
.props td { padding: 0 0 2px 2px; }
.props th span { margin-left: -10px; }
.props th.end { text-align: right; padding-right: 3px; direction: rtl; }
.props .group th { background: #dadcdb; border: 0; }
.group svg { margin-left: auto; margin-right: 5px; margin-bottom: 6px; }
.props td button { display: block; width: 122px; height: 22px; border: 1px solid #a5a7a6; border-right-width: 2px; border-bottom-width: 2px; background: #e1e3e2; line-height: 18px; padding-right: 4px; }
.props td.focus { padding: 0; border: 0; }
.props td input[type="text"] { display: block; width: 124px; height: 23px; padding: 0 5px; border: 1px solid #111; background: #fdfdfd; border-radius: 0; }
.props td input[type="checkbox"] { appearance: none; display: block; width: 13px; height: 13px; margin: 0 0 2px 1px; border: 1px solid #222; background: #fff; }
.props td input[type="checkbox"]:disabled { border-color: #ccc; }
.dim { color: #808281; }
.vscroll { display: flex; flex-direction: column; align-items: center; background: #f0f1f0; }
.pscroll { width: 19px; margin-left: 1px; padding: 6px 0; }
.pscroll i { width: 19px; flex: 0 1 431px; margin: 7px 0 auto; background: #cbcdcc; }
.props footer { display: flex; justify-content: flex-end; padding: 2px; height: 28px; flex: none; }
.props footer button { width: 98px; height: 24px; background: #c9cbca; color: #8b8d8c; }

.view { display: flex; flex: 1; min-width: 0; margin-left: 7px; border-left: 1px solid #666; border-top: 2px solid #777; background: #fdfdfd; }
.stage { display: flex; flex-direction: column; flex: 1; min-width: 0; }
.canvas { position: relative; flex: 1; min-height: 0; }
.scene { width: 100%; height: 100%; }
.cube text { fill: #a9abac; }
.t24 { font-size: 24px; }
.t14 { font-size: 14px; }
.mdi { position: absolute; right: 5px; top: 8px; display: flex; gap: 6px; }
.navbar { position: absolute; right: 1px; top: 199px; width: 35px; height: 118px; padding: 4px 3px; border: 2px solid #c2c4c3; border-radius: 5px; background: #f1f2f1; display: flex; flex-direction: column; align-items: center; justify-content: space-between; }
.navbar .x { align-self: flex-end; }
.navbar i { border: 3px solid transparent; border-top: 3px solid #888; border-bottom: 0; }
.navbar hr { width: 100%; margin: 0; border: 0; border-top: 1px solid #c2c4c3; }
.pointer { position: absolute; left: 56.600%; top: 64.500%; }
.caption { position: absolute; left: 0; right: 0; bottom: 14px; padding-left: 6px; text-align: center; font-size: 55px; line-height: 72px; font-weight: 500; color: #fff; -webkit-text-stroke: 6px #0a0a0a; paint-order: stroke fill; stroke-linejoin: round; }
.viewbar { display: flex; align-items: center; height: 22px; flex: none; background: #f0f1f0; }
.viewbar .scale { width: 103px; padding-left: 28px; font: 13px/20px "Liberation Mono", monospace; color: #111; }
.viewbar button { width: 28px; }
.viewbar svg { width: 18px; height: 18px; margin: 0 auto; }
.viewbar .narrow { width: 24px; }
.hscroll { flex: 1; height: 20px; }
.hscroll i { display: block; width: 20px; height: 20px; margin-left: 49%; background: #c9cbca; }
.wscroll { width: 20px; padding: 6px 0 1px; }
.wscroll i { width: 19px; height: 21px; margin: auto 0; background: #c9cbca; }
.wscroll .grip { margin-top: 18px; }

.browser { width: 161px; flex: none; margin-left: 6px; display: flex; flex-direction: column; overflow: hidden; color: #111; }
.browser .dock { padding-left: 4px; white-space: nowrap; }
.tree { flex: 1; margin-top: 2px; border-top: 1px solid #666; border-left: 1px solid #666; background: #fdfdfd; line-height: 22px; white-space: nowrap; overflow: hidden; }
.tree li { position: relative; }
.views::before, .leaf::before { content: ""; position: absolute; left: 9px; top: 0; bottom: 0; border-left: 1px dotted #999; }
.l1 { padding-left: 47px; }
.l1 > li::before { content: ""; position: absolute; left: -18px; top: 0; bottom: 0; border-left: 1px dotted #999; }
.l1 > li:last-child::before { bottom: auto; height: 11px; }
.l1 > li::after { content: ""; position: absolute; left: -13px; top: 11px; width: 10px; border-top: 1px dotted #999; }
.box { position: absolute; z-index: 1; left: -22px; top: 7px; width: 9px; height: 9px; border: 1px solid #999; background: #fff; }
.box::before { content: ""; position: absolute; left: 1px; right: 1px; top: 3px; border-top: 1px solid #444; }
.l2 li { padding-left: 20px; }
.l2 li::before { content: ""; position: absolute; left: 2px; top: 0; bottom: 0; border-left: 1px dotted #999; }
.l2 li:last-child::before { bottom: 11px; }
.l2 li::after { content: ""; position: absolute; left: 2px; top: 11px; width: 15px; border-top: 1px dotted #999; }
.l2 strong { display: inline-block; margin-left: -3px; padding: 0 3px; background: #dadcdb; }
.leaf { display: flex; align-items: center; gap: 6px; padding-left: 21px; }
.leaf::after { content: ""; position: absolute; left: 10px; top: 11px; width: 9px; border-top: 1px dotted #999; }

/* Status bar */
.status { display: flex; align-items: center; height: 24px; flex: none; padding-top: 2px; border-top: 1px solid #999; background: linear-gradient(#dfe1e0, #b9bbba); color: #111; }
.status p { flex: 1; margin-left: -3px; white-space: nowrap; }
.sets { display: flex; align-items: center; gap: 8px; margin-right: 199px; }
.sets output { width: 28px; margin-left: -6px; }
.sets select { appearance: none; display: block; height: 21px; padding: 0 5px; border: 0; border-radius: 0; background: #fdfdfd; color: #777; line-height: 20px; }
.combo { position: relative; }
.combo svg { position: absolute; right: 3px; top: 8px; }
.sets .workset { width: 204px; }
.sets .option { width: 154px; }
.select { display: flex; width: 137px; overflow: hidden; flex: none; }
.select button { width: 26px; flex: none; }
.select svg { width: 22px; height: 18px; }

/* Taskbar */
.taskbar { display: flex; height: 50px; flex: none; background: linear-gradient(90deg, #41463d 0, #41463d 50%, #3a4030 62%, #25331f 72%, #263427 80%, #3b302a 90%, #302c28 100%); color: #fff; }
.ring { width: 40px; display: flex; align-items: center; }
.tasks { width: 48px; padding-left: 3px; display: flex; align-items: center; }
.app { display: flex; align-items: center; gap: 4px; width: 190px; margin-right: 10px; padding: 2px 8px 0; border-bottom: 3px solid #e8c689; overflow: hidden; }
.app.revit { width: 200px; margin-right: 6px; padding-left: 13px; background: #696d66; }
.tray { display: flex; align-items: center; gap: 12px; margin-left: auto; }
.ime { font-size: 20px; }
.tray time { display: flex; flex-direction: column; align-items: flex-end; line-height: 24px; }
```
